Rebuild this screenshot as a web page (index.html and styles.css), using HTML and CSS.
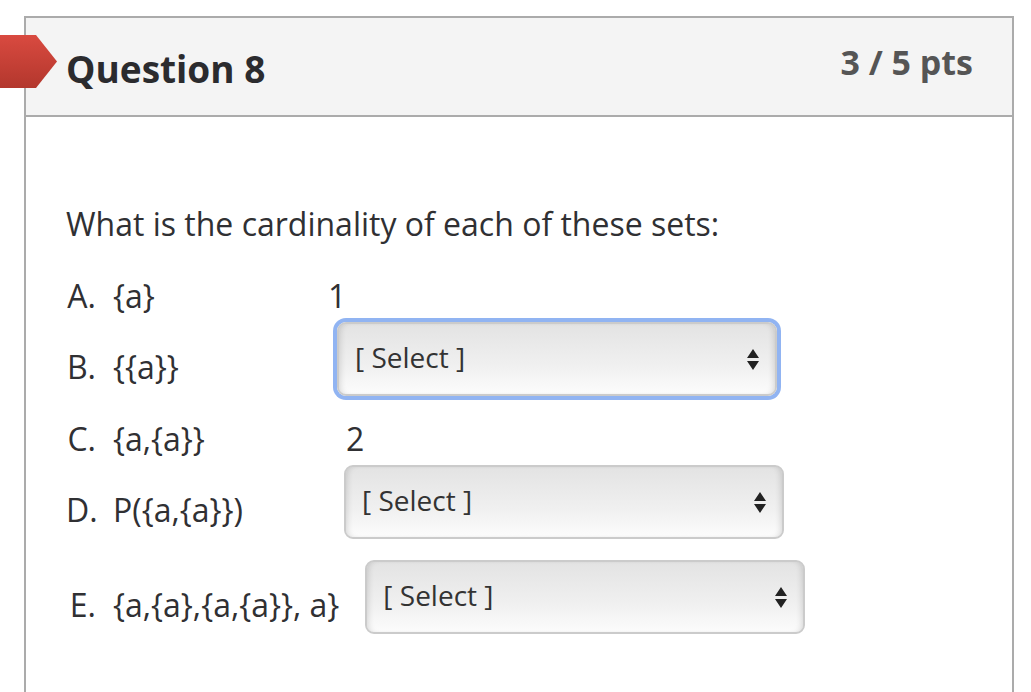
FILE: index.html
```html
<!DOCTYPE html>
<html>
<head>
    <title>Question 8</title>
    <meta charset="UTF-8">
    <link rel="stylesheet" href="styles.css">
</head>
<body>
    <div class="question">
        <div class="question-header">
            <div class="flag"></div>
            <h2 class="question-title">Question 8</h2>
            <div class="points">3 / 5 pts</div>
        </div>

        <div class="question-body">
            <p class="question-text">What is the cardinality of each of these sets:</p>

            <div class="opt">
                <div class="opt-label opt-label-a"><span class="letter">A.</span>{a}</div>
                <div class="answer">1</div>
            </div>

            <div class="opt">
                <div class="opt-label opt-label-b"><span class="letter">B.</span>{{a}}</div>
                <div class="select focused">
                    <span>[ Select ]</span>
                    <svg width="12" height="21" viewBox="0 0 12 21"><path d="M6 0 L12 9 L0 9 Z M0 12 L12 12 L6 21 Z" fill="#222"/></svg>
                </div>
            </div>

            <div class="opt opt-c">
                <div class="opt-label opt-label-c"><span class="letter">C.</span>{a,{a}}</div>
                <div class="answer">2</div>
            </div>

            <div class="opt">
                <div class="opt-label opt-label-d"><span class="letter">D.</span>P({a,{a}})</div>
                <div class="select">
                    <span>[ Select ]</span>
                    <svg width="12" height="21" viewBox="0 0 12 21"><path d="M6 0 L12 9 L0 9 Z M0 12 L12 12 L6 21 Z" fill="#222"/></svg>
                </div>
            </div>

            <div class="opt opt-e">
                <div class="opt-label opt-label-e"><span class="letter">E.</span>{a,{a},{a,{a}}, a}</div>
                <div class="select">
                    <span>[ Select ]</span>
                    <svg width="12" height="21" viewBox="0 0 12 21"><path d="M6 0 L12 9 L0 9 Z M0 12 L12 12 L6 21 Z" fill="#222"/></svg>
                </div>
            </div>
        </div>
    </div>
</body>
</html>
```

FILE: styles.css
```css
html, body { overflow: hidden; }
body { margin: 0; font-family: "Open Sans", sans-serif; color: #303033; background: #fff; }

.question {
    position: relative;
    margin: 16px 17px 0 24px;
    border: 2px solid #ababab;
    border-bottom: none;
    min-height: 720px;
}
.question-header {
    display: flex;
    justify-content: space-between;
    align-items: flex-start;
    height: 97px;
    padding: 0 39px 0 40px;
    background: #f4f4f4;
    border-bottom: 2px solid #ababab;
}
.flag {
    position: absolute;
    left: -26px;
    top: 17px;
    width: 57px;
    height: 53px;
    background: linear-gradient(#d94a40, #b3372d);
    clip-path: polygon(0 0, 36px 0, 57px 50%, 36px 100%, 0 100%);
}
.question-title { margin: 0; padding-top: 26px; font-size: 37px; font-weight: 700; line-height: 1.362; color: #2b2b2e; }
.points { padding-top: 21px; font-size: 34px; font-weight: 700; line-height: 1.362; color: #555; }

.question-body { padding: 0 40px; }
.question-text { margin: 85px 0 12px; font-size: 32px; line-height: 44px; }

.opt { display: flex; align-items: center; margin-bottom: 4px; font-size: 32px; line-height: 44px; }
.opt-c { margin-top: 5px; }
.opt-e { margin-top: 21px; }
.opt-label { padding-top: 16px; white-space: nowrap; flex-shrink: 0; }
.letter { display: inline-block; width: 30px; margin-right: 17px; text-align: right; }
.opt-label-a { width: 262px; }
.opt-label-b { width: 271px; }
.opt-label-c { width: 280px; }
.opt-label-d { width: 278px; }
.opt-label-e { padding-right: 26px; }
.answer { padding-top: 16px; }

.select {
    display: flex;
    align-items: center;
    justify-content: space-between;
    box-sizing: border-box;
    width: 440px;
    height: 74px;
    padding: 0 16px 0 16px;
    border: 2px solid #cbcbcb;
    border-radius: 9px;
    background: linear-gradient(#e3e3e3, #f0f0f0 60%, #fcfcfc);
    box-shadow: inset 5px 0 6px -4px rgba(0,0,0,0.15), inset -5px 0 6px -4px rgba(0,0,0,0.15);
    font-size: 28px;
    line-height: 1;
    color: #333;
}
.select span { padding-bottom: 4px; }
.focused {
    box-shadow: 0 0 0 4px #91b4f2, inset 5px 0 6px -4px rgba(0,0,0,0.15), inset -5px 0 6px -4px rgba(0,0,0,0.15);
}
```
